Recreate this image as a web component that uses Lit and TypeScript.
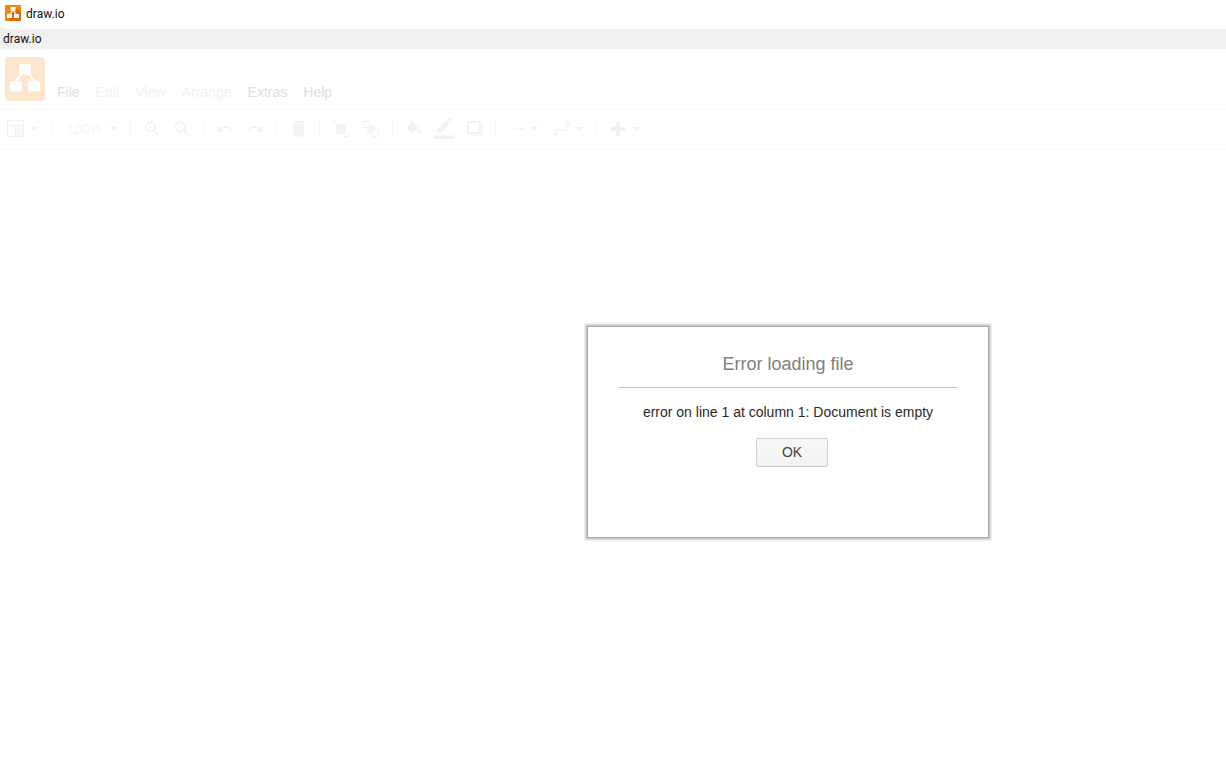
import { LitElement, html, css, svg } from "lit";
import { customElement } from "lit/decorators.js";

const lens = "M15.5 14h-.79l-.28-.27C15.41 12.59 16 11.11 16 9.5 16 5.91 13.09 3 9.5 3S3 5.91 3 9.5 5.91 16 9.5 16c1.61 0 3.09-.59 4.23-1.57l.27.28v.79l5 4.99L20.49 19l-4.99-5zm-6 0C7.01 14 5 11.99 5 9.5S7.01 5 9.5 5 14 7.01 14 9.5 11.99 14 9.5 14z";

const icon = (body: unknown, size = 18, box = "0 0 24 24") =>
  html`<svg class="ic" width=${size} height=${size} viewBox=${box}>${body}</svg>`;

const caret = html`<svg class="car" width="8" height="4" viewBox="0 0 8 4"><path d="M0 0h8L4 4z"/></svg>`;

@customElement("app-root")
export class AppRoot extends LitElement {
  static styles = css`
    :host { display: block; width: 1226px; height: 779px; position: relative; background: #fff; overflow: hidden; font-family: "Liberation Sans", Arial, sans-serif; }
    .title { height: 29px; display: flex; align-items: center; gap: 5px; padding-left: 5px; box-sizing: border-box; font: 12px Roboto, sans-serif; letter-spacing: 0.05px; color: #111; }
    .fav { display: block; margin-top: -3px; }
    .title span { margin-top: -2px; }
    .tab { height: 20px; background: #f0f0f0; padding-left: 3px; font: 12px/20px Roboto, sans-serif; letter-spacing: 0.05px; color: #111; }
    .menubar { height: 61px; box-sizing: border-box; border-bottom: 1px solid #f7f7f7; display: flex; padding: 8px 0 0 5px; }
    .logo { width: 40px; height: 44px; display: block; }
    .menus { display: flex; gap: 16px; margin-left: 12px; padding-top: 27px; font-size: 14px; line-height: 17px; height: 17px; }
    .on { color: #e0e0e0; }
    .off { color: #f2f2f2; }
    .toolbar { height: 40px; box-sizing: border-box; border-bottom: 1px solid #f7f7f7; display: flex; align-items: center; padding: 0 0 2px 6px; }
    .btn { width: 30px; height: 24px; display: flex; align-items: center; justify-content: center; flex: none; }
    .ic { fill: #f2f2f2; display: block; }
    .car { fill: #f2f2f2; display: block; }
    .sep { width: 1px; height: 20px; background: #f7f7f7; margin: 0 6px; flex: none; }
    .tbl { width: 18px; }
    .c20 { width: 20px; margin-right: 1px; }
    .c22 { width: 22px; }
    .zoom { width: 44px; text-align: right; font-size: 14px; color: #f5f5f5; flex: none; }
    .w16 { width: 16px; }
    .c18 { width: 18px; }
    .m8 { margin-left: 8px; }
    .m10 { margin-left: 10px; }
    .m7 { margin-left: 7px; }
    .sepc { margin-left: 8px; }
    .dialog { position: absolute; left: 587px; top: 326px; width: 402px; height: 212px; box-sizing: border-box; background: #fff; border: 1px solid #a8a8a8; box-shadow: 0 0 2px 2px #c9c9c9; display: flex; flex-direction: column; align-items: center; }
    .dlg-title { margin-top: 26px; font-size: 18px; line-height: 22px; color: #808080; }
    .rule { width: 340px; height: 1px; background: #c0c0c0; margin-top: 12px; }
    .msg { margin-top: 16px; font-size: 14px; line-height: 17px; color: #2a2a2a; }
    .ok { margin: 17px 0 0 8px; width: 72px; height: 29px; box-sizing: border-box; border: 1px solid #cfcfcf; border-radius: 2px; background: linear-gradient(#f7f7f7, #f2f2f2); font: 14px "Liberation Sans", Arial, sans-serif; color: #444; padding: 0 0 2px; }
  `;

  render() {
    return html`
      <div class="title">
        <svg class="fav" width="16" height="16" viewBox="0 0 16 16">
          <rect width="16" height="16" rx="1" fill="#f08705"/>
          <path d="M16 6V16H6L2 12l3-3 1.500-5H11z" fill="#df6c0c"/>
          <path d="M8 5 4.500 10M8 5l3.500 5" stroke="#fff" stroke-width="1.200" fill="none"/>
          <rect x="5.500" y="2" width="5" height="4" rx=".6" fill="#fff"/>
          <rect x="2" y="9" width="5" height="4" rx=".6" fill="#fff"/>
          <rect x="9" y="9" width="5" height="4" rx=".6" fill="#fff"/>
        </svg>
        <span>draw.io</span>
      </div>
      <div class="tab">draw.io</div>
      <div class="menubar">
        <svg class="logo" viewBox="0 0 40 44">
          <rect width="40" height="44" rx="4" fill="#fde6cd"/>
          <path d="M17 16 10 25M23 16l7 9" stroke="#fff" stroke-width="2" fill="none"/>
          <rect x="14" y="7" width="12" height="10.500" rx="2.500" fill="#fff"/>
          <rect x="5" y="24" width="12" height="10.500" rx="2.500" fill="#fff"/>
          <rect x="23" y="24" width="12" height="10.500" rx="2.500" fill="#fff"/>
        </svg>
        <div class="menus">
          <span class="on">File</span><span class="off">Edit</span><span class="off">View</span><span class="off">Arrange</span><span class="on">Extras</span><span class="on">Help</span>
        </div>
      </div>
      <div class="toolbar">
        <div class="btn tbl"><svg width="18" height="18" viewBox="0 0 18 18"><rect x="10" y="6" width="7" height="11" fill="#f9f9f9"/><path d="M1.500.5h16v16h-16zM1.500 5.500h16M9.500 5.500v11" fill="none" stroke="#f0f0f0"/></svg></div>
        <div class="btn c20">${caret}</div>
        <div class="sep"></div>
        <div class="zoom">100%</div>
        <div class="btn c22">${caret}</div>
        <div class="sep"></div>
        <div class="btn">${icon(svg`<path d=${lens}/><path d="M12 10h-2v2H9v-2H7V9h2V7h1v2h2v1z"/>`, 20, "-0.5 0 24 24")}</div>
        <div class="btn">${icon(svg`<path d=${lens}/><path d="M7 9h5v1H7z"/>`, 20, "-0.5 0 24 24")}</div>
        <div class="sep"></div>
        <div class="btn">${icon(svg`<path d="M12.500 8c-2.650 0-5.050.99-6.900 2.600L2 7v9h9l-3.620-3.620c1.390-1.160 3.160-1.880 5.120-1.880 3.540 0 6.550 2.310 7.600 5.500l2.370-.78C21.080 11.030 17.150 8 12.500 8z"/>`)}</div>
        <div class="btn">${icon(svg`<path d="M18.400 10.600C16.550 8.990 14.150 8 11.500 8c-4.650 0-8.580 3.030-9.960 7.220L3.900 16c1.050-3.190 4.050-5.500 7.600-5.500 1.950 0 3.730.72 5.120 1.880L13 16h9V7l-3.600 3.600z"/>`)}</div>
        <div class="sep"></div>
        <div class="btn">${icon(svg`<path d="M6 19c0 1.100.9 2 2 2h8c1.100 0 2-.9 2-2V7H6v12zM19 4h-3.500l-1-1h-5l-1 1H5v2h14V4z"/>`, 21)}</div>
        <div class="sep"></div>
        <div class="btn"><svg width="16" height="16" viewBox="0 0 16 16"><path d="M.5 4.500v-4h4M15.500 11v4.500H11" fill="none" stroke="#f2f2f2"/><rect x="3" y="3" width="10" height="10" fill="#f4f4f4"/></svg></div>
        <div class="btn"><svg width="16" height="16" viewBox="0 0 16 16"><rect x="4" y="4" width="8" height="8" fill="#f4f4f4"/><path d="M.5.5h6v6h-6zM9.500 9.500h6v6h-6z" fill="#fff" stroke="#f2f2f2"/></svg></div>
        <div class="sep"></div>
        <div class="btn">${icon(svg`<path d="M16.560 8.940 7.620 0 6.210 1.410l2.380 2.380-5.150 5.150c-.59.59-.59 1.540 0 2.120l5.500 5.500c.29.29.68.44 1.060.44s.77-.15 1.060-.44l5.500-5.500c.59-.58.59-1.530 0-2.120zM19 11.500s-2 2.170-2 3.500c0 1.100.9 2 2 2s2-.9 2-2c0-1.330-2-3.500-2-3.500z"/>`)}</div>
        <div class="btn"><svg class="ic" width="21" height="21" viewBox="0 0 24 24"><path d="M17.750 7 14 3.250l-10 10V17h3.750l10-10zm2.960-2.960c.39-.39.39-1.020 0-1.410L18.370.29c-.39-.39-1.020-.39-1.410 0L15 2.250 18.750 6l1.960-1.960z"/><path d="M0 20h24v4H0z"/></svg></div>
        <div class="btn"><svg width="18" height="16" viewBox="0 0 18 16"><rect x="5" y="3" width="13" height="12" fill="#f8f8f8"/><rect x="3" y="1" width="12" height="11" fill="#fff" stroke="#f2f2f2" stroke-width="2"/></svg></div>
        <div class="sep"></div>
        <div class="btn w16 m8"><svg width="16" height="8" viewBox="0 0 16 8"><path d="M0 4h13" stroke="#f2f2f2" fill="none"/><path d="M11 2l4 2-4 2z" fill="#f2f2f2"/></svg></div>
        <div class="btn c18">${caret}</div>
        <div class="btn w16 m10"><svg width="16" height="16" viewBox="0 0 16 16"><path d="M2 13V8.500h11V3" fill="none" stroke="#f2f2f2"/><rect x=".5" y="12.500" width="2.500" height="2.500" fill="#fff" stroke="#f2f2f2"/><rect x="12" y="1" width="2.500" height="2.500" fill="#fff" stroke="#f2f2f2"/></svg></div>
        <div class="btn c18">${caret}</div>
        <div class="sep sepc"></div>
        <div class="btn w16 m7"><svg width="14" height="14" viewBox="0 0 14 14"><path d="M5 0h4v5h5v4H9v5H5V9H0V5h5z" fill="#f0f0f0"/></svg></div>
        <div class="btn c22">${caret}</div>
      </div>
      <div class="dialog">
        <div class="dlg-title">Error loading file</div>
        <div class="rule"></div>
        <div class="msg">error on line 1 at column 1: Document is empty</div>
        <button class="ok">OK</button>
      </div>
    `;
  }
}
